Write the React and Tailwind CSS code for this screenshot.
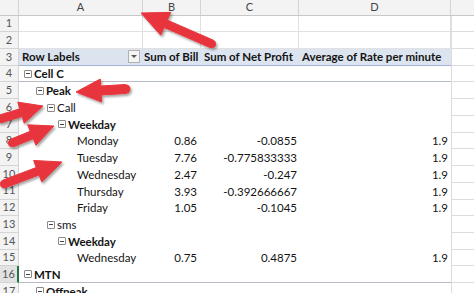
import React from 'react';

const rows = [
    { n: 1 },
    { n: 2 },
    { n: 3, header: true },
    { n: 4, label: 'Cell C', level: 0, bold: true, toggle: true, line: true },
    { n: 5, label: 'Peak', level: 1, bold: true, toggle: true },
    { n: 6, label: 'Call', level: 2, toggle: true },
    { n: 7, label: 'Weekday', level: 3, bold: true, toggle: true },
    { n: 8, label: 'Monday', level: 4, bill: '0.86', profit: '-0.0855', rate: '1.9' },
    { n: 9, label: 'Tuesday', level: 4, bill: '7.76', profit: '-0.775833333', rate: '1.9' },
    { n: 10, label: 'Wednesday', level: 4, bill: '2.47', profit: '-0.247', rate: '1.9' },
    { n: 11, label: 'Thursday', level: 4, bill: '3.93', profit: '-0.392666667', rate: '1.9' },
    { n: 12, label: 'Friday', level: 4, bill: '1.05', profit: '-0.1045', rate: '1.9' },
    { n: 13, label: 'sms', level: 2, toggle: true },
    { n: 14, label: 'Weekday', level: 3, bold: true, toggle: true },
    { n: 15, label: 'Wednesday', level: 4, bill: '0.75', profit: '0.4875', rate: '1.9' },
    { n: 16, label: 'MTN', level: 0, bold: true, toggle: true, line: true, selected: true },
    { n: 17, label: 'Offpeak', level: 1, bold: true, toggle: true },
];

// left offset of the label inside column A, per level
const indents = ['pl-[5px]', 'pl-[17px]', 'pl-[28px]', 'pl-[39px]', 'pl-[58px]'];

const MinusBox = () => (
    <span className="mr-[2px] inline-flex h-[8px] w-[8px] shrink-0 items-center justify-center rounded-[1px] border border-[#8a8a8a] bg-white">
        <span className="h-px w-[4px] bg-[#444]" />
    </span>
);

const Arrow = ({ from, to, shaft = 8, headLen = 24, headW = 24 }) => {
    const [x1, y1] = from;
    const [x2, y2] = to;
    const len = Math.hypot(x2 - x1, y2 - y1);
    const ux = (x2 - x1) / len;
    const uy = (y2 - y1) / len;
    const px = -uy;
    const py = ux;
    const bx = x2 - ux * headLen;
    const by = y2 - uy * headLen;
    const s = shaft / 2;
    const h = headW / 2;
    const pts = [
        [x1 + px * s, y1 + py * s],
        [bx + px * s, by + py * s],
        [bx + px * h, by + py * h],
        [x2, y2],
        [bx - px * h, by - py * h],
        [bx - px * s, by - py * s],
        [x1 - px * s, y1 - py * s],
    ].map(p => p.join(',')).join(' ');
    return (
        <g filter="url(#shadow)">
            <polygon points={pts} fill="#e8363c" strokeLinejoin="round" stroke="#e8363c" strokeWidth="1" />
            <circle cx={x1} cy={y1} r={s} fill="#e8363c" />
        </g>
    );
};

const App = () => {
    return (
        <div className="relative h-[293px] w-[474px] overflow-hidden bg-white font-['Lato','Liberation_Sans',sans-serif] text-[11.5px] text-[#141414]">
            {/* column letters */}
            <div className="flex h-[15.6px] border-b border-[#c8c8c8] bg-[#f3f3f3] text-[11px] text-[#444]">
                <div className="w-[19px] border-r border-[#d4d4d4]" />
                <div className="flex w-[124px] items-center justify-center border-r border-[#d4d4d4]">A</div>
                <div className="flex w-[58px] items-center justify-center border-r border-[#d4d4d4]">B</div>
                <div className="flex w-[98px] items-center justify-center border-r border-[#d4d4d4]">C</div>
                <div className="flex w-[152px] items-center justify-center border-r border-[#d4d4d4]">D</div>
                <div className="flex-1" />
            </div>

            {rows.map(row => {
                const pivot = row.n >= 3;
                const cellBorder = pivot ? '' : 'border-b border-r border-[#e1e1e1]';
                let rowLine = '';
                if (row.header) rowLine = 'bg-[#dce4f0] border-b border-[#9fb4d4]';
                else if (row.line) rowLine = 'border-b border-[#b5bcc7]';
                return (
                    <div key={row.n} className="flex h-[16.73px]">
                        <div
                            className={`flex w-[19px] shrink-0 items-center justify-center border-b text-[11px] text-[#555] ${
                                row.selected
                                    ? 'border-r-2 border-b-[#d4d4d4] border-r-[#217346] bg-[#e2e2e2]'
                                    : 'border-r border-[#d4d4d4] bg-[#f3f3f3]'
                            }`}
                        >
                            {row.n}
                        </div>

                        <div className={`flex w-[432px] shrink-0 ${rowLine}`}>
                            <div className={`flex w-[124px] items-center ${cellBorder} ${row.header ? 'pl-[3px] font-bold' : indents[row.level] || ''} ${row.bold ? 'font-bold' : ''}`}>
                                {row.header ? (
                                    <>
                                        <span>Row Labels</span>
                                        <span className="ml-auto mr-[3px] flex h-[13px] w-[12px] items-center justify-center border border-[#b0b0b0] bg-[#f4f4f4]">
                                            <span className="h-0 w-0 border-x-[3px] border-t-[3px] border-x-transparent border-t-[#555]" />
                                        </span>
                                    </>
                                ) : (
                                    <>
                                        {row.toggle && <MinusBox />}
                                        {row.label && <span>{row.label}</span>}
                                    </>
                                )}
                            </div>
                            <div className={`flex w-[58px] items-center ${cellBorder} ${row.header ? 'pl-[1px] font-bold' : 'justify-end pr-[4px]'}`}>
                                {row.header ? 'Sum of Bill' : row.bill}
                            </div>
                            <div className={`flex w-[98px] items-center ${cellBorder} ${row.header ? 'pl-[3px] font-bold' : 'justify-end pr-[2px]'}`}>
                                {row.header ? 'Sum of Net Profit' : row.profit}
                            </div>
                            <div className={`flex w-[152px] items-center ${cellBorder} ${row.header ? 'pl-[3px] font-bold whitespace-nowrap' : 'justify-end pr-[3px]'}`}>
                                {row.header ? 'Average of Rate per minute' : row.rate}
                            </div>
                        </div>

                        <div className="flex-1 border-b border-l border-[#dcdcdc]" />
                    </div>
                );
            })}

            <svg className="pointer-events-none absolute inset-0" width="474" height="293" viewBox="0 0 474 293">
                <defs>
                    <filter id="shadow" x="-20%" y="-20%" width="140%" height="140%">
                        <feDropShadow dx="1.5" dy="2" stdDeviation="1.2" floodColor="#000" floodOpacity="0.35" />
                    </filter>
                </defs>
                <Arrow from={[212, 44]} to={[141, 13]} shaft={8} headLen={27} headW={25} />
                <Arrow from={[126, 89]} to={[76, 92]} shaft={9} headLen={25} headW={23} />
                <Arrow from={[0, 119]} to={[43, 106]} shaft={8} headLen={23} headW={22} />
                <Arrow from={[12, 143]} to={[54, 126]} shaft={8} headLen={24} headW={22} />
                <Arrow from={[4, 184]} to={[62, 162]} shaft={8} headLen={26} headW={23} />
            </svg>
        </div>
    );
};

export default App;
